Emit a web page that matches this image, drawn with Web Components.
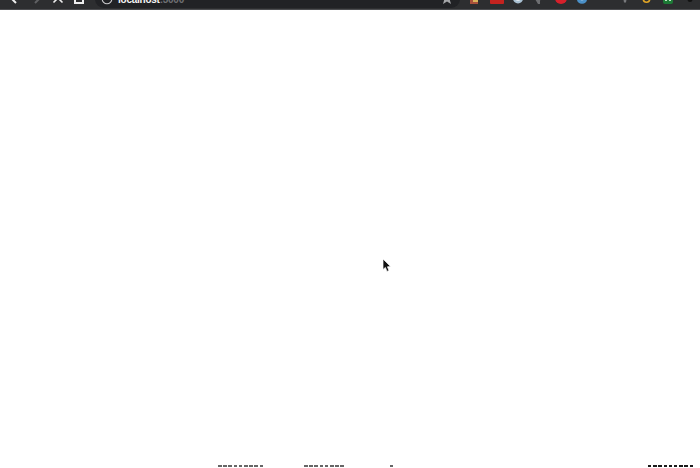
<!DOCTYPE html>
<html>
<head>
<meta charset="utf-8">
<title>localhost</title>
<style>
  html, body { margin: 0; height: 100%; background: #fff; overflow: hidden; }
</style>
</head>
<body>
<demo-page>
  <browser-bar slot="top" url="localhost" port=":3000"></browser-bar>
  <page-foot slot="bottom"></page-foot>
</demo-page>

<script>
// toolbar of the browser, only its lower edge is in the picture
class BrowserBar extends HTMLElement {
  constructor() {
    super();
    const shadow = this.attachShadow({ mode: "open" });
    shadow.innerHTML = `
      <style>
        :host {
          display: flex;
          align-items: flex-end;
          height: 10px;
          box-sizing: border-box;
          background: #2d2e30;
          border-bottom: 1px solid #4c4d50;
          overflow: hidden;
          font-family: "Liberation Sans", sans-serif;
          flex: none;
        }
        .nav { display: flex; align-items: flex-end; gap: 6px; padding-left: 4px; margin-bottom: 5px; width: 95px; box-sizing: border-box; flex: none; height: 12px; }
        .nav svg { flex: none; display: block; }
        .url {
          flex: none;
          width: 365px;
          height: 20px;
          margin-bottom: 1px;
          box-sizing: border-box;
          background: #212225;
          border-radius: 0 0 9px 9px;
          display: flex;
          align-items: flex-end;
          padding: 0 7px 3px 5px;
          gap: 5px;
          color: #f4f4f4;
          font-size: 10px;
          font-weight: bold;
          line-height: 10px;
          letter-spacing: -0.25px;
        }
        .url span span { color: #6e6f73; }
        .info { flex: none; margin: 0 0 0 1px; }
        .star { margin: 0 0 1px auto; flex: none; }
        .ext { flex: 1; display: flex; align-items: flex-end; margin-bottom: 5px; }
        .tray { flex: none; display: block; }
      </style>
      <div class="nav">
        <svg width="18" height="12" viewBox="0 0 18 12"><path d="M12 1 L7 6 L12 11" fill="none" stroke="#eee" stroke-width="2"/></svg>
        <svg width="18" height="12" viewBox="0 0 18 12"><path d="M7 1 L12 6 L7 11" fill="none" stroke="#5f6063" stroke-width="2"/></svg>
        <svg width="12" height="12" viewBox="0 0 12 12"><path d="M1.5 1.5 L10.5 10.5 M10.5 1.5 L1.5 10.5" fill="none" stroke="#eee" stroke-width="1.6"/></svg>
        <svg width="12" height="12" viewBox="0 0 12 12" style="margin-left:3px"><path d="M2 1 V11 H10 V1" fill="none" stroke="#eee" stroke-width="2"/></svg>
      </div>
      <div class="url">
        <svg class="info" width="12" height="12" viewBox="0 0 12 12"><circle cx="6" cy="6" r="4.8" fill="none" stroke="#c9c9cb" stroke-width="1.1"/></svg>
        <span id="u"></span>
        <svg class="star" width="12" height="12" viewBox="0 0 12 12"><path d="M2 12 L3.4 7.2 L0 4 H12 L8.6 7.2 L10 12 L6 9.4 Z" fill="#a4a5a8"/></svg>
      </div>
      <div class="ext">
        <svg class="tray" width="240" height="12" viewBox="0 0 240 12">
          <rect x="10" y="6" width="8" height="6" fill="#a8503a"/>
          <rect x="13" y="8" width="5" height="2" fill="#d9b25a"/>
          <rect x="30" y="2" width="14" height="10" rx="1" fill="#c4231f"/>
          <circle cx="58" cy="6.5" r="5" fill="#a9c0d2"/>
          <circle cx="58" cy="6.5" r="2.5" fill="#e4ebf0"/>
          <path d="M75 7 L83 6 L80 8.5 L80 12 L78 12 Z" fill="#6d6e71"/>
          <circle cx="101" cy="6" r="6" fill="#d6202b"/>
          <rect x="98.5" y="5" width="5" height="3" fill="#fff"/>
          <circle cx="122" cy="6.5" r="5.2" fill="#4a90c8"/>
          <circle cx="122" cy="6.5" r="2" fill="#9fc6e6"/>
          <path d="M163 5 L167 5 L166 10.5 L164 10.5 Z" fill="#77787b"/>
          <circle cx="186.5" cy="7" r="3.2" fill="none" stroke="#e0a526" stroke-width="1.6"/>
          <rect x="203" y="4" width="10" height="8" rx="2" fill="#1d7a36"/>
          <rect x="205" y="6" width="2" height="3" fill="#bfe8c6"/>
          <rect x="209" y="6" width="2" height="3" fill="#bfe8c6"/>
          <circle cx="230" cy="7.5" r="2.5" fill="#111"/>
        </svg>
      </div>
    `;
    shadow.getElementById("u").innerHTML =
      `${this.getAttribute("url")}<span>${this.getAttribute("port")}</span>`;
  }
}

// row of dashes at the lower edge, the only part of the page showing there
class PageFoot extends HTMLElement {
  constructor() {
    super();
    const shadow = this.attachShadow({ mode: "open" });
    shadow.innerHTML = `
      <style>
        :host {
          display: flex;
          flex: none;
          height: 6px;
          padding: 3px 0 0 218px;
          box-sizing: border-box;
        }
        i { display: block; height: 2px; flex: none; }
        .a { width: 47px; background: repeating-linear-gradient(90deg, #666 0 3.6px, transparent 3.6px 5.2px); margin-right: 39px; }
        .b { width: 42px; background: repeating-linear-gradient(90deg, #666 0 3.6px, transparent 3.6px 5.2px); margin-right: 44px; }
        .c { width: 3px; background: #666; margin-right: 255px; }
        .d { width: 47px; background: repeating-linear-gradient(90deg, #1a1a1a 0 3.4px, transparent 3.4px 5.2px); }
      </style>
      <i class="a"></i><i class="b"></i><i class="c"></i><i class="d"></i>
    `;
  }
}

// whole page: toolbar, empty white area, footer edge, and the mouse pointer on top
class DemoPage extends HTMLElement {
  constructor() {
    super();
    const shadow = this.attachShadow({ mode: "open" });
    shadow.innerHTML = `
      <style>
        :host {
          display: flex;
          flex-direction: column;
          height: 468px;
          width: 700px;
          position: relative;
          background: #fff;
        }
        main { flex: 1; }
        svg { position: absolute; left: 382px; top: 258px; }
      </style>
      <slot name="top"></slot>
      <main></main>
      <slot name="bottom"></slot>
      <svg width="10" height="15" viewBox="0 0 10 15">
        <path d="M1 1 V11.5 L3.4 9.4 L5 13.4 L7 12.6 L5.4 8.8 L8.6 8.6 Z" fill="#111" stroke="#fff" stroke-width="0.7"/>
      </svg>
    `;
  }
}

customElements.define("browser-bar", BrowserBar);
customElements.define("page-foot", PageFoot);
customElements.define("demo-page", DemoPage);
</script>
</body>
</html>
